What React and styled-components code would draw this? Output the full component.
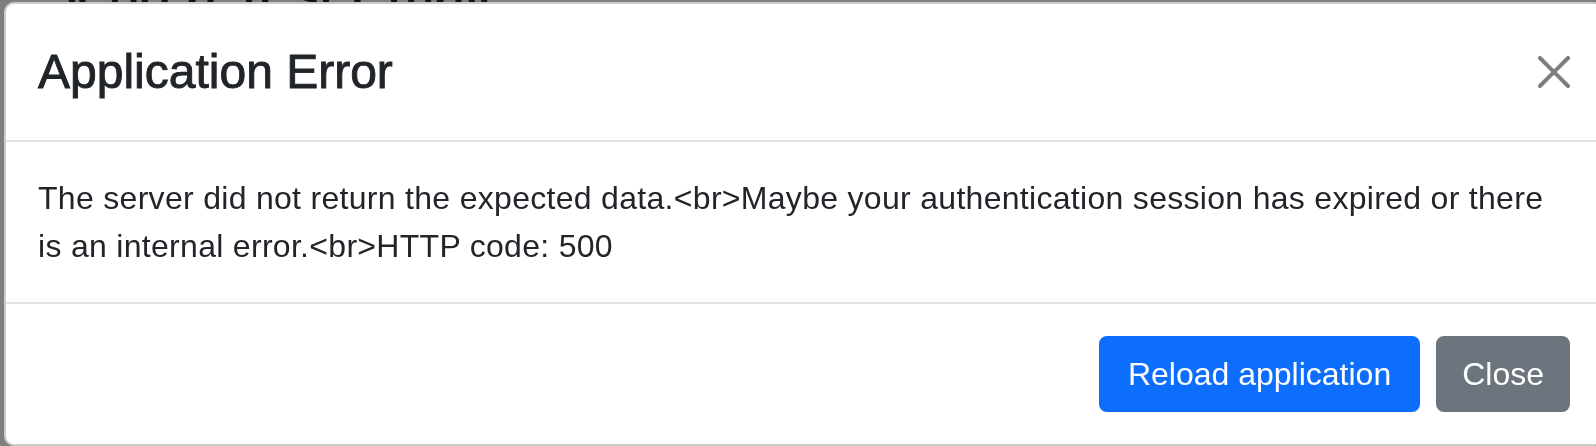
import React from 'react';
import styled, { createGlobalStyle } from 'styled-components';

const GlobalStyle = createGlobalStyle`
  html, body {
    margin: 0;
    padding: 0;
    background: #fff;
    overflow: hidden;
  }
  body {
    font-family: "Liberation Sans", Arial, sans-serif;
    color: #212529;
  }
  * {
    box-sizing: border-box;
  }
`;

const Page = styled.div`
  height: 446px;
  padding: 0 0 0 40px;
`;

const PageTitle = styled.h1`
  margin: -40px 0 0;
  font-size: 56px;
  font-weight: 400;
  line-height: 1.2;
  color: #212529;
  -webkit-text-stroke: 1px #212529;
`;

const Backdrop = styled.div`
  position: fixed;
  inset: 0;
  background: rgba(0, 0, 0, 0.5);
`;

const Dialog = styled.div`
  position: fixed;
  top: 2px;
  left: 4px;
  width: 1600px;
`;

const Content = styled.div`
  display: flex;
  flex-direction: column;
  background: #fff;
  border: 2px solid rgba(0, 0, 0, 0.2);
  border-radius: 10px;
`;

const Header = styled.div`
  display: flex;
  align-items: center;
  justify-content: space-between;
  padding: 32px;
  border-bottom: 2px solid #dee2e6;
`;

const Title = styled.h4`
  margin: 0;
  font-size: 48px;
  font-weight: 400;
  line-height: 72px;
  color: #212529;
  -webkit-text-stroke: 0.9px #212529;
`;

const CloseIcon = styled.button`
  width: 32px;
  height: 32px;
  padding: 0;
  border: 0;
  background: transparent;
  opacity: 0.5;
  cursor: pointer;
  svg {
    display: block;
    width: 32px;
    height: 32px;
  }
`;

const Body = styled.div`
  padding: 32px;
  font-size: 32px;
  line-height: 48px;
  letter-spacing: 0.3px;
`;

const Footer = styled.div`
  display: flex;
  justify-content: flex-end;
  align-items: center;
  padding: 24px;
  border-top: 2px solid #dee2e6;
`;

const Button = styled.button`
  margin: 8px;
  padding: 12px ${(p) => (p.$variant === 'primary' ? '27px' : '24px')};
  font-family: inherit;
  font-size: 32px;
  line-height: 48px;
  color: #fff;
  border: 2px solid ${(p) => (p.$variant === 'primary' ? '#0d6efd' : '#6c757d')};
  background: ${(p) => (p.$variant === 'primary' ? '#0d6efd' : '#6c757d')};
  border-radius: 8px;
  cursor: pointer;
`;

export default function App() {
  return (
    <>
      <GlobalStyle />
      <Page>
        <PageTitle>Send a Test Email</PageTitle>
      </Page>
      <Backdrop />
      <Dialog>
        <Content>
          <Header>
            <Title>Application Error</Title>
            <CloseIcon aria-label="Close">
              <svg viewBox="0 0 16 16" fill="#000">
                <path d="M.293.293a1 1 0 0 1 1.414 0L8 6.586 14.293.293a1 1 0 1 1 1.414 1.414L9.414 8l6.293 6.293a1 1 0 0 1-1.414 1.414L8 9.414l-6.293 6.293a1 1 0 0 1-1.414-1.414L6.586 8 .293 1.707a1 1 0 0 1 0-1.414z" />
              </svg>
            </CloseIcon>
          </Header>
          <Body>
            The server did not return the expected data.&lt;br&gt;Maybe your authentication session has expired or there is an internal error.&lt;br&gt;HTTP code: 500
          </Body>
          <Footer>
            <Button $variant="primary">Reload application</Button>
            <Button $variant="secondary">Close</Button>
          </Footer>
        </Content>
      </Dialog>
    </>
  );
}
